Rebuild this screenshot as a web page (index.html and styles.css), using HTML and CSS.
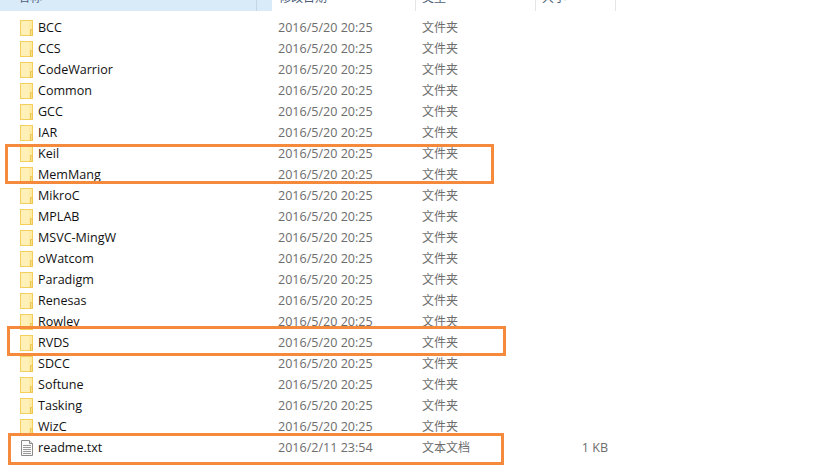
FILE: index.html
```html
<!DOCTYPE html>
<html lang="zh">
<head>
<meta charset="utf-8">
<title>文件列表</title>
<link rel="stylesheet" href="styles.css">
</head>
<body>
<svg class="defs" width="0" height="0" aria-hidden="true">
  <symbol id="folder" viewBox="0 0 16 16">
    <rect x="1.5" y="0.5" width="12" height="15" fill="#fdeba6" stroke="#f4cf5c"/>
    <rect x="2" y="1" width="8" height="14" fill="#fff0b8"/>
    <path d="M11.5 15.5V9.5H13.5V15.5Z" fill="#fbe08a" stroke="#eec550"/>
  </symbol>
  <symbol id="doc" viewBox="0 0 16 16">
    <path d="M2.5.5H10.5L13.5 3.5V15.5H2.5Z" fill="#fbfbfb" stroke="#8a8a8a"/>
    <path d="M10.5.5V3.5H13.5" fill="#e2e2e2" stroke="#8a8a8a"/>
    <path d="M4 5.5H12M4 7.5H12M4 9.5H12M4 11.5H12M4 13.5H12" stroke="#9a9a9a"/>
  </symbol>
</svg>
<div class="explorer">
  <div class="header">
    <div class="col col-name head-active"><span class="head-label">名称</span></div>
    <div class="col col-date"><span class="head-label">修改日期</span></div>
    <div class="col col-type"><span class="head-label">类型</span></div>
    <div class="col col-size"><span class="head-label">大小</span></div>
  </div>
  <div class="rows" id="rows">
    <div class="row"><div class="col-name name"><svg class="icon"><use href="#folder"/></svg>BCC</div><div class="col-date meta">2016/5/20 20:25</div><div class="col-type meta">文件夹</div></div>
    <div class="row"><div class="col-name name"><svg class="icon"><use href="#folder"/></svg>CCS</div><div class="col-date meta">2016/5/20 20:25</div><div class="col-type meta">文件夹</div></div>
    <div class="row"><div class="col-name name"><svg class="icon"><use href="#folder"/></svg>CodeWarrior</div><div class="col-date meta">2016/5/20 20:25</div><div class="col-type meta">文件夹</div></div>
    <div class="row"><div class="col-name name"><svg class="icon"><use href="#folder"/></svg>Common</div><div class="col-date meta">2016/5/20 20:25</div><div class="col-type meta">文件夹</div></div>
    <div class="row"><div class="col-name name"><svg class="icon"><use href="#folder"/></svg>GCC</div><div class="col-date meta">2016/5/20 20:25</div><div class="col-type meta">文件夹</div></div>
    <div class="row"><div class="col-name name"><svg class="icon"><use href="#folder"/></svg>IAR</div><div class="col-date meta">2016/5/20 20:25</div><div class="col-type meta">文件夹</div></div>
    <div class="row"><div class="col-name name"><svg class="icon"><use href="#folder"/></svg>Keil</div><div class="col-date meta">2016/5/20 20:25</div><div class="col-type meta">文件夹</div></div>
    <div class="row"><div class="col-name name"><svg class="icon"><use href="#folder"/></svg>MemMang</div><div class="col-date meta">2016/5/20 20:25</div><div class="col-type meta">文件夹</div></div>
    <div class="row"><div class="col-name name"><svg class="icon"><use href="#folder"/></svg>MikroC</div><div class="col-date meta">2016/5/20 20:25</div><div class="col-type meta">文件夹</div></div>
    <div class="row"><div class="col-name name"><svg class="icon"><use href="#folder"/></svg>MPLAB</div><div class="col-date meta">2016/5/20 20:25</div><div class="col-type meta">文件夹</div></div>
    <div class="row"><div class="col-name name"><svg class="icon"><use href="#folder"/></svg>MSVC-MingW</div><div class="col-date meta">2016/5/20 20:25</div><div class="col-type meta">文件夹</div></div>
    <div class="row"><div class="col-name name"><svg class="icon"><use href="#folder"/></svg>oWatcom</div><div class="col-date meta">2016/5/20 20:25</div><div class="col-type meta">文件夹</div></div>
    <div class="row"><div class="col-name name"><svg class="icon"><use href="#folder"/></svg>Paradigm</div><div class="col-date meta">2016/5/20 20:25</div><div class="col-type meta">文件夹</div></div>
    <div class="row"><div class="col-name name"><svg class="icon"><use href="#folder"/></svg>Renesas</div><div class="col-date meta">2016/5/20 20:25</div><div class="col-type meta">文件夹</div></div>
    <div class="row"><div class="col-name name"><svg class="icon"><use href="#folder"/></svg>Rowley</div><div class="col-date meta">2016/5/20 20:25</div><div class="col-type meta">文件夹</div></div>
    <div class="row"><div class="col-name name"><svg class="icon"><use href="#folder"/></svg>RVDS</div><div class="col-date meta">2016/5/20 20:25</div><div class="col-type meta">文件夹</div></div>
    <div class="row"><div class="col-name name"><svg class="icon"><use href="#folder"/></svg>SDCC</div><div class="col-date meta">2016/5/20 20:25</div><div class="col-type meta">文件夹</div></div>
    <div class="row"><div class="col-name name"><svg class="icon"><use href="#folder"/></svg>Softune</div><div class="col-date meta">2016/5/20 20:25</div><div class="col-type meta">文件夹</div></div>
    <div class="row"><div class="col-name name"><svg class="icon"><use href="#folder"/></svg>Tasking</div><div class="col-date meta">2016/5/20 20:25</div><div class="col-type meta">文件夹</div></div>
    <div class="row"><div class="col-name name"><svg class="icon"><use href="#folder"/></svg>WizC</div><div class="col-date meta">2016/5/20 20:25</div><div class="col-type meta">文件夹</div></div>
    <div class="row"><div class="col-name name"><svg class="icon"><use href="#doc"/></svg>readme.txt</div><div class="col-date meta">2016/2/11 23:54</div><div class="col-type meta">文本文档</div><div class="col-size meta size-val">1 KB</div></div>
  </div>
</div>
<div class="mark mark-a"></div>
<div class="mark mark-b"></div>
<div class="mark mark-c"></div>
</body>
</html>
```
FILE: styles.css
```css
html, body { margin: 0; padding: 0; background: #fff; }
body {
  width: 819px;
  height: 474px;
  overflow: hidden;
  position: relative;
  font-family: "Open Sans", "Noto Sans CJK SC", sans-serif;
  font-size: 12.55px;
}
.defs { position: absolute; }
.explorer { display: flex; flex-direction: column; }
.header { display: flex; height: 11px; overflow: hidden; font-size: 12px; }
.header .col {
  box-sizing: border-box;
  height: 11px;
  border-right: 1px solid #e5e5e5;
  color: #4c607a;
}
.head-active { background: #d9ebf9; border-right-color: #c4d6e6 !important; }
.head-label { display: block; line-height: 16px; white-space: nowrap; margin-top: -10px; }
.col-name { width: 256px; flex: none; }
.header .col-name { padding-left: 18px; width: 257px; }
.header .col-date { width: 159px; background: linear-gradient(to right, #d9ebf9 15px, #fff 15px); padding-left: 22px; }
.header .col-type { padding-left: 6px; width: 120px; }
.header .col-size { padding-left: 6px; width: 80px; }
.rows { padding-top: 6px; }
.row { display: flex; height: 21px; align-items: center; white-space: nowrap; }
.name {
  display: flex;
  align-items: center;
  gap: 6px;
  padding-left: 18px;
  box-sizing: border-box;
  width: 278px;
  color: #111;
}
.icon { width: 16px; height: 16px; flex: none; margin-left: 1px; margin-right: -3px; }
.meta { color: #6d6d6d; }
.col-date { width: 144px; flex: none; }
.col-type { width: 122px; flex: none; font-size: 12px; padding-bottom: 2px; }
.size-val { width: 64px; text-align: right; }
.mark { position: absolute; box-sizing: border-box; border: 3px solid #f58a3c; }
.mark-a { left: 5px; top: 144px; width: 489px; height: 40px; }
.mark-b { left: 7px; top: 326px; width: 499px; height: 30px; }
.mark-c { left: 8px; top: 433px; width: 496px; height: 32px; }
```
